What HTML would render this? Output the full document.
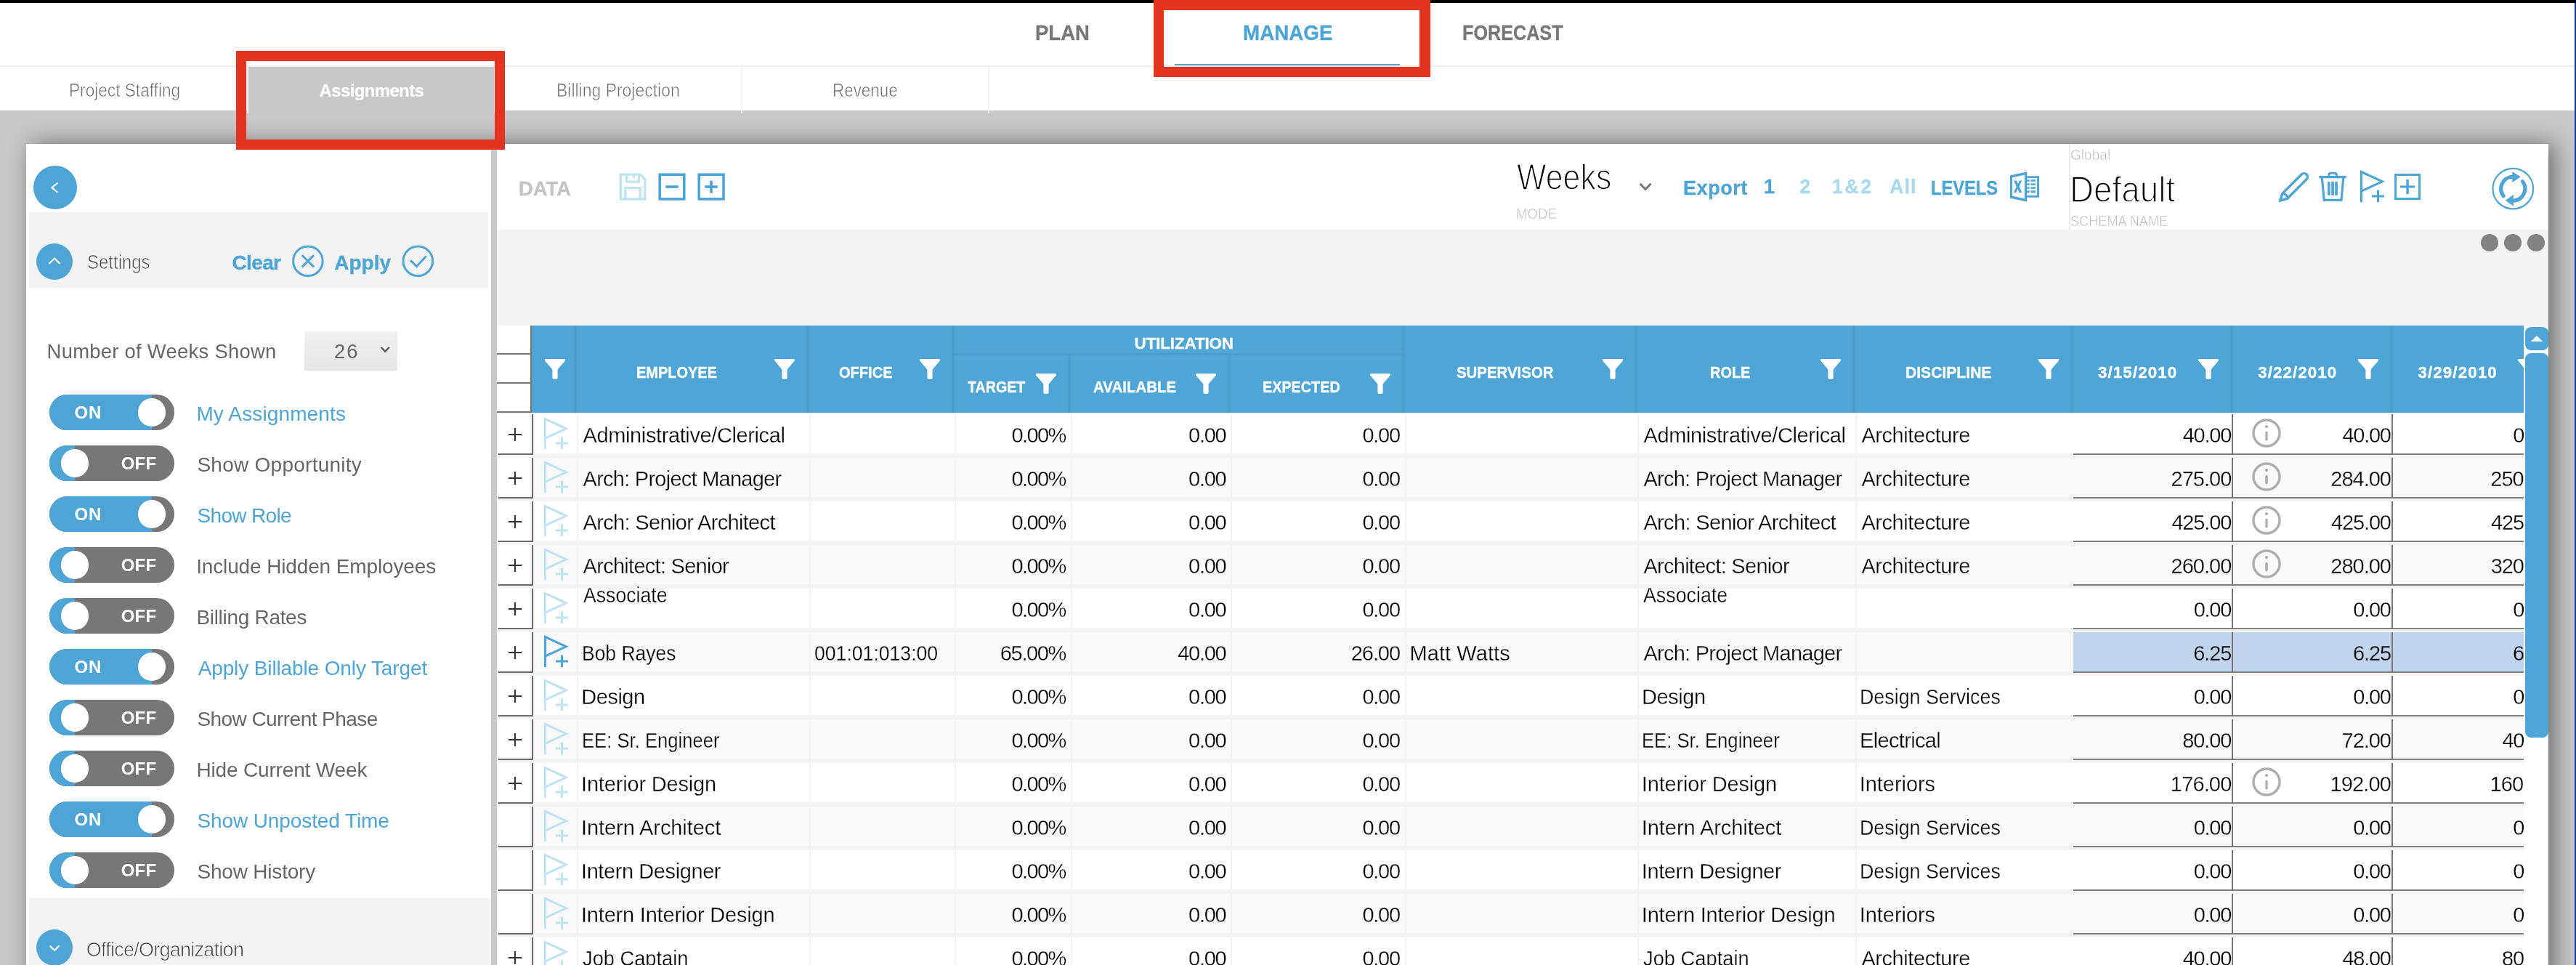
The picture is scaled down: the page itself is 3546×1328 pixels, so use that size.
<!DOCTYPE html>
<html><head><meta charset="utf-8"><title>Assignments</title>
<style>
html,body{margin:0;padding:0;}
body{width:3546px;height:1328px;overflow:hidden;position:relative;background:#c8c8c8;font-family:"Liberation Sans",sans-serif;}
#root{position:absolute;left:0;top:0;width:3546px;height:1328px;overflow:hidden;will-change:transform;}
#root div,#root span,#root svg{position:absolute;}
.t{white-space:pre;display:block;}
</style></head><body><div id="root">
<div style="left:0px;top:0px;width:3546px;height:4px;background:#000;"></div>
<div style="left:0px;top:4px;width:3546px;height:86px;background:#fff;"></div>
<div style="left:0px;top:90px;width:3546px;height:2px;background:#efefef;"></div>
<div style="left:0px;top:92px;width:3546px;height:60px;background:#fff;"></div>
<div style="left:3544px;top:4px;width:2px;height:1328px;background:#10399b;"></div>
<span class="t " style="left:1424.93px;top:31px;font-size:29px;line-height:29px;color:#777;font-weight:700;transform:scaleX(0.9497);transform-origin:0 0;-webkit-text-stroke:0.3px #777;">PLAN</span>
<span class="t " style="left:1710.81px;top:31px;font-size:29px;line-height:29px;color:#4ea5d5;font-weight:700;transform:scaleX(0.9574);transform-origin:0 0;-webkit-text-stroke:0.3px #4ea5d5;">MANAGE</span>
<span class="t " style="left:2012.98px;top:31px;font-size:29px;line-height:29px;color:#777;font-weight:700;transform:scaleX(0.8685);transform-origin:0 0;-webkit-text-stroke:0.3px #777;">FORECAST</span>
<div style="left:1617px;top:88px;width:310px;height:2px;background:#4ea5d5;"></div>
<div style="left:342px;top:92px;width:338px;height:60px;background:#c8c8c8;"></div>
<div style="left:340px;top:92px;width:2px;height:64px;background:#f3f3f3;"></div>
<div style="left:680px;top:92px;width:2px;height:64px;background:#f3f3f3;"></div>
<div style="left:1020px;top:92px;width:2px;height:64px;background:#f3f3f3;"></div>
<div style="left:1360px;top:92px;width:2px;height:64px;background:#f3f3f3;"></div>
<span class="t " style="left:94.59px;top:112px;font-size:25px;line-height:25px;color:#6c6c6c;transform:scaleX(0.9056);transform-origin:0 0;-webkit-text-stroke:0.55px #fff;">Project Staffing</span>
<span class="t " style="left:439.53px;top:113px;font-size:24px;line-height:24px;color:#fff;font-weight:700;letter-spacing:-0.639px;-webkit-text-stroke:0.2px #fff;">Assignments</span>
<span class="t " style="left:766.36px;top:112px;font-size:25px;line-height:25px;color:#6c6c6c;transform:scaleX(0.9183);transform-origin:0 0;-webkit-text-stroke:0.55px #fff;">Billing Projection</span>
<span class="t " style="left:1146.11px;top:112px;font-size:25px;line-height:25px;color:#6c6c6c;transform:scaleX(0.8959);transform-origin:0 0;-webkit-text-stroke:0.55px #fff;">Revenue</span>
<div style="left:0;top:152px;width:3544px;height:1176px;overflow:hidden;"><div style="left:36px;top:46px;width:3472px;height:1210px;background:#fff;box-shadow:8px 0 30px 0 rgba(0,0,0,.47);"></div></div>
<div style="left:3543px;top:152px;width:1px;height:1328px;background:#d2d0cc;"></div>
<div style="left:676px;top:198px;width:8px;height:1328px;background:#c8c8c8;"></div>
<div style="left:684px;top:316px;width:2824px;height:1328px;background:#f3f3f3;"></div>
<div style="left:46px;top:228px;width:60px;height:60px;border-radius:50%;background:#4ea5d5;"></div>
<svg style="left:46px;top:228px;" width="60" height="60" viewBox="0 0 60 60"><path d="M33.5 23.5 L25.5 30.2 L33.5 37" fill="none" stroke="#fff" stroke-width="2.2"/></svg>
<div style="left:40px;top:292px;width:632px;height:104px;background:#f3f3f3;"></div>
<div style="left:50px;top:334.5px;width:50px;height:50px;border-radius:50%;background:#4ea5d5;"></div>
<svg style="left:50px;top:334.5px;" width="50" height="50" viewBox="0 0 50 50"><path d="M17.5 28 L25 20.5 L32.5 28" fill="none" stroke="#fff" stroke-width="2.2"/></svg>
<span class="t " style="left:119.57px;top:348px;font-size:27px;line-height:27px;color:#444;transform:scaleX(0.8877);transform-origin:0 0;-webkit-text-stroke:0.7px #f3f3f3;">Settings</span>
<span class="t " style="left:319.45px;top:348px;font-size:28px;line-height:28px;color:#4ea5d5;font-weight:700;letter-spacing:-0.620px;-webkit-text-stroke:0.35px #4ea5d5;">Clear</span>
<span class="t " style="left:460.31px;top:348px;font-size:28px;line-height:28px;color:#4ea5d5;font-weight:700;letter-spacing:-0.029px;-webkit-text-stroke:0.35px #4ea5d5;">Apply</span>
<svg style="left:400px;top:335px;" width="50" height="50" viewBox="0 0 50 50"><circle cx="23.9" cy="24.3" r="20.3" fill="none" stroke="#4ea5d5" stroke-width="3"/><path d="M15.8 16.2 L32 32.4 M32 16.2 L15.8 32.4" stroke="#4ea5d5" stroke-width="3" fill="none"/></svg>
<svg style="left:551px;top:335px;" width="50" height="50" viewBox="0 0 50 50"><circle cx="24.3" cy="24.3" r="20.3" fill="none" stroke="#4ea5d5" stroke-width="3"/><path d="M14 23.3 L22.6 31.6 L35.6 17.5" stroke="#4ea5d5" stroke-width="3" fill="none"/></svg>
<span class="t " style="left:64.57px;top:470px;font-size:27.4px;line-height:27.4px;color:#666;letter-spacing:0.282px;">Number of Weeks Shown</span>
<div style="left:419px;top:456px;width:128px;height:54px;background:linear-gradient(#f1f1f1,#e5e5e5);"></div>
<span class="t " style="left:460.03px;top:470px;font-size:27.4px;line-height:27.4px;color:#666;letter-spacing:1.986px;">26</span>
<svg style="left:520px;top:472px;" width="20" height="20" viewBox="0 0 20 20"><path d="M4.6 6 L10.2 11.6 L15.8 6" fill="none" stroke="#555" stroke-width="2.3"/></svg>
<div style="left:68px;top:543px;width:172px;height:49px;border-radius:24.5px;overflow:hidden;background:#777;"><div style="left:0;top:0;width:141px;height:49px;background:#4ea5d5;"></div></div>
<div style="left:189.7px;top:548.2px;width:38.6px;height:38.6px;border-radius:50%;background:#fff;"></div>
<span class="t " style="left:102.54px;top:556px;font-size:24px;line-height:24px;color:#fff;font-weight:700;letter-spacing:0.780px;">ON</span>
<span class="t " style="left:270.43px;top:556px;font-size:28px;line-height:28px;color:#4ea5d5;letter-spacing:0.124px;">My Assignments</span>
<div style="left:68px;top:613px;width:172px;height:49px;border-radius:24.5px;overflow:hidden;background:#777;"><div style="left:0;top:0;width:35px;height:49px;background:#4ea5d5;"></div></div>
<div style="left:83.7px;top:618.2px;width:38.6px;height:38.6px;border-radius:50%;background:#fff;"></div>
<span class="t " style="left:166.64px;top:626px;font-size:24px;line-height:24px;color:#fff;font-weight:700;letter-spacing:0.215px;">OFF</span>
<span class="t " style="left:271.44px;top:626px;font-size:28px;line-height:28px;color:#666;letter-spacing:0.255px;">Show Opportunity</span>
<div style="left:68px;top:683px;width:172px;height:49px;border-radius:24.5px;overflow:hidden;background:#777;"><div style="left:0;top:0;width:141px;height:49px;background:#4ea5d5;"></div></div>
<div style="left:189.7px;top:688.2px;width:38.6px;height:38.6px;border-radius:50%;background:#fff;"></div>
<span class="t " style="left:102.54px;top:696px;font-size:24px;line-height:24px;color:#fff;font-weight:700;letter-spacing:0.780px;">ON</span>
<span class="t " style="left:271.44px;top:696px;font-size:28px;line-height:28px;color:#4ea5d5;letter-spacing:-0.654px;">Show Role</span>
<div style="left:68px;top:753px;width:172px;height:49px;border-radius:24.5px;overflow:hidden;background:#777;"><div style="left:0;top:0;width:35px;height:49px;background:#4ea5d5;"></div></div>
<div style="left:83.7px;top:758.2px;width:38.6px;height:38.6px;border-radius:50%;background:#fff;"></div>
<span class="t " style="left:166.64px;top:766px;font-size:24px;line-height:24px;color:#fff;font-weight:700;letter-spacing:0.215px;">OFF</span>
<span class="t " style="left:270.14px;top:766px;font-size:28px;line-height:28px;color:#666;letter-spacing:-0.133px;">Include Hidden Employees</span>
<div style="left:68px;top:823px;width:172px;height:49px;border-radius:24.5px;overflow:hidden;background:#777;"><div style="left:0;top:0;width:35px;height:49px;background:#4ea5d5;"></div></div>
<div style="left:83.7px;top:828.2px;width:38.6px;height:38.6px;border-radius:50%;background:#fff;"></div>
<span class="t " style="left:166.64px;top:836px;font-size:24px;line-height:24px;color:#fff;font-weight:700;letter-spacing:0.215px;">OFF</span>
<span class="t " style="left:270.43px;top:836px;font-size:28px;line-height:28px;color:#666;letter-spacing:-0.305px;">Billing Rates</span>
<div style="left:68px;top:893px;width:172px;height:49px;border-radius:24.5px;overflow:hidden;background:#777;"><div style="left:0;top:0;width:141px;height:49px;background:#4ea5d5;"></div></div>
<div style="left:189.7px;top:898.2px;width:38.6px;height:38.6px;border-radius:50%;background:#fff;"></div>
<span class="t " style="left:102.54px;top:906px;font-size:24px;line-height:24px;color:#fff;font-weight:700;letter-spacing:0.780px;">ON</span>
<span class="t " style="left:272.66px;top:906px;font-size:28px;line-height:28px;color:#4ea5d5;letter-spacing:-0.121px;">Apply Billable Only Target</span>
<div style="left:68px;top:963px;width:172px;height:49px;border-radius:24.5px;overflow:hidden;background:#777;"><div style="left:0;top:0;width:35px;height:49px;background:#4ea5d5;"></div></div>
<div style="left:83.7px;top:968.2px;width:38.6px;height:38.6px;border-radius:50%;background:#fff;"></div>
<span class="t " style="left:166.64px;top:976px;font-size:24px;line-height:24px;color:#fff;font-weight:700;letter-spacing:0.215px;">OFF</span>
<span class="t " style="left:271.44px;top:976px;font-size:28px;line-height:28px;color:#666;letter-spacing:-0.564px;">Show Current Phase</span>
<div style="left:68px;top:1033px;width:172px;height:49px;border-radius:24.5px;overflow:hidden;background:#777;"><div style="left:0;top:0;width:35px;height:49px;background:#4ea5d5;"></div></div>
<div style="left:83.7px;top:1038.2px;width:38.6px;height:38.6px;border-radius:50%;background:#fff;"></div>
<span class="t " style="left:166.64px;top:1046px;font-size:24px;line-height:24px;color:#fff;font-weight:700;letter-spacing:0.215px;">OFF</span>
<span class="t " style="left:270.43px;top:1046px;font-size:28px;line-height:28px;color:#666;letter-spacing:-0.161px;">Hide Current Week</span>
<div style="left:68px;top:1103px;width:172px;height:49px;border-radius:24.5px;overflow:hidden;background:#777;"><div style="left:0;top:0;width:141px;height:49px;background:#4ea5d5;"></div></div>
<div style="left:189.7px;top:1108.2px;width:38.6px;height:38.6px;border-radius:50%;background:#fff;"></div>
<span class="t " style="left:102.54px;top:1116px;font-size:24px;line-height:24px;color:#fff;font-weight:700;letter-spacing:0.780px;">ON</span>
<span class="t " style="left:271.44px;top:1116px;font-size:28px;line-height:28px;color:#4ea5d5;letter-spacing:-0.103px;">Show Unposted Time</span>
<div style="left:68px;top:1173px;width:172px;height:49px;border-radius:24.5px;overflow:hidden;background:#777;"><div style="left:0;top:0;width:35px;height:49px;background:#4ea5d5;"></div></div>
<div style="left:83.7px;top:1178.2px;width:38.6px;height:38.6px;border-radius:50%;background:#fff;"></div>
<span class="t " style="left:166.64px;top:1186px;font-size:24px;line-height:24px;color:#fff;font-weight:700;letter-spacing:0.215px;">OFF</span>
<span class="t " style="left:271.44px;top:1186px;font-size:28px;line-height:28px;color:#666;letter-spacing:-0.196px;">Show History</span>
<div style="left:40px;top:1236px;width:636px;height:100px;background:#f3f3f3;"></div>
<div style="left:50px;top:1279px;width:50px;height:50px;border-radius:50%;background:#4ea5d5;"></div>
<svg style="left:50px;top:1279px;" width="50" height="50" viewBox="0 0 50 50"><path d="M18.5 22.5 L25 29 L31.5 22.5" fill="none" stroke="#fff" stroke-width="2.2"/></svg>
<span class="t " style="left:118.70px;top:1294px;font-size:27px;line-height:27px;color:#444;letter-spacing:-0.745px;-webkit-text-stroke:0.7px #f3f3f3;">Office/Organization</span>
<span class="t " style="left:714.06px;top:246px;font-size:27.4px;line-height:27.4px;color:#c4c4c4;font-weight:700;letter-spacing:0.019px;-webkit-text-stroke:0.35px #c4c4c4;">DATA</span>
<svg style="left:850px;top:236px;" width="44" height="44" viewBox="0 0 44 44"><g fill="none" stroke="#bfe3f1" stroke-width="3.3"><path d="M4.3 4.1 H31.2 L37.9 10.8 V38 H4.3 Z"/><path d="M12.5 4 V14.2 H29.4 V4"/><path d="M10.8 38 V22.6 H31.3 V38"/></g><rect x="21.1" y="4" width="3" height="5" fill="#bfe3f1"/></svg>
<svg style="left:904px;top:236px;" width="44" height="44" viewBox="0 0 44 44"><rect x="4.2" y="4.2" width="33.6" height="33.7" fill="none" stroke="#4ea5d5" stroke-width="3.6"/><rect x="12.3" y="19.2" width="17.4" height="3.7" fill="#4ea5d5"/></svg>
<svg style="left:958px;top:236px;" width="44" height="44" viewBox="0 0 44 44"><rect x="4.2" y="4.2" width="33.8" height="33.7" fill="none" stroke="#4ea5d5" stroke-width="3.6"/><rect x="12.3" y="19.2" width="17.4" height="3.7" fill="#4ea5d5"/><rect x="19.2" y="12.6" width="3.7" height="17.1" fill="#4ea5d5"/></svg>
<span class="t " style="left:2087.59px;top:219px;font-size:50.4px;line-height:50.4px;color:#000;transform:scaleX(0.8515);transform-origin:0 0;-webkit-text-stroke:1.7px #fff;">Weeks</span>
<span class="t " style="left:2086.84px;top:284px;font-size:20.4px;line-height:20.4px;color:#bbb;transform:scaleX(0.9135);transform-origin:0 0;-webkit-text-stroke:0.5px #fff;">MODE</span>
<svg style="left:2250px;top:245px;" width="30" height="24" viewBox="0 0 30 24"><path d="M7.6 7.8 L15 15.6 L22.4 7.8" fill="none" stroke="#777" stroke-width="3"/></svg>
<span class="t " style="left:2317.09px;top:246px;font-size:27px;line-height:27px;color:#4ea5d5;font-weight:700;letter-spacing:0.511px;-webkit-text-stroke:0.35px #4ea5d5;">Export</span>
<span class="t " style="left:2427.99px;top:244px;font-size:27px;line-height:27px;color:#4ea5d5;font-weight:700;-webkit-text-stroke:0.35px #4ea5d5;">1</span>
<span class="t " style="left:2477.26px;top:244px;font-size:27px;line-height:27px;color:#a9d9ed;font-weight:700;-webkit-text-stroke:0.35px #a9d9ed;">2</span>
<span class="t " style="left:2521.69px;top:244px;font-size:27px;line-height:27px;color:#a9d9ed;font-weight:700;letter-spacing:2.586px;-webkit-text-stroke:0.35px #a9d9ed;">1&amp;2</span>
<span class="t " style="left:2600.93px;top:244px;font-size:27px;line-height:27px;color:#a9d9ed;font-weight:700;letter-spacing:0.994px;-webkit-text-stroke:0.35px #a9d9ed;">All</span>
<span class="t " style="left:2657.61px;top:246px;font-size:27px;line-height:27px;color:#4ea5d5;font-weight:700;transform:scaleX(0.8772);transform-origin:0 0;-webkit-text-stroke:0.35px #4ea5d5;">LEVELS</span>
<svg style="left:2766px;top:236px;" width="42" height="42" viewBox="0 0 42 42"><g fill="#4ea5d5"><path fill-rule="evenodd" d="M1 5.2 L24.2 0.6 V41.4 L1 36.7 Z M4 8.2 L21 4.8 V37.4 L4 33.6 Z"/><path fill-rule="evenodd" d="M24.2 6.2 H41 V35.8 H24.2 Z M24.2 9 H38.1 V32.9 H24.2 Z"/><rect x="24.2" y="11.2" width="3.5" height="2.6"/><rect x="29.4" y="11.2" width="6.6" height="2.6"/><rect x="24.2" y="16.3" width="3.5" height="2.6"/><rect x="29.4" y="16.3" width="6.6" height="2.6"/><rect x="24.2" y="21.3" width="3.5" height="2.6"/><rect x="29.4" y="21.3" width="6.6" height="2.6"/><rect x="24.2" y="26.3" width="3.5" height="3.1"/><rect x="29.4" y="26.3" width="6.6" height="3.1"/><path d="M6 12.6 H9.9 L11.8 17.3 L13.9 12.6 H17.3 L13.6 20.6 L17.4 29.1 H13.6 L11.6 24 L9.4 29.1 H6 L9.8 20.7 Z"/></g></svg>
<div style="left:2848px;top:198px;width:2px;height:118px;background:#ececec;"></div>
<span class="t " style="left:2849.50px;top:202px;font-size:21px;line-height:21px;color:#bbb;transform:scaleX(0.9095);transform-origin:0 0;-webkit-text-stroke:0.5px #fff;">Global</span>
<span class="t " style="left:2848.63px;top:236px;font-size:50px;line-height:50px;color:#000;transform:scaleX(0.9159);transform-origin:0 0;-webkit-text-stroke:1.7px #fff;">Default</span>
<span class="t " style="left:2849.63px;top:293px;font-size:21px;line-height:21px;color:#bbb;transform:scaleX(0.8645);transform-origin:0 0;-webkit-text-stroke:0.5px #fff;">SCHEMA NAME</span>
<svg style="left:3130px;top:230px;" width="56" height="56" viewBox="0 0 56 56"><g transform="translate(7.1 47.9) rotate(-45)" fill="none" stroke="#4ea5d5" stroke-width="3.4" stroke-linejoin="miter"><path d="M2.6 0 L11.2 -4.8 H48.8 A4.8 4.8 0 0 1 48.8 4.8 H11.2 Z"/><path d="M11.2 -4.8 Q16.4 0 11.2 4.8"/></g></svg>
<svg style="left:3190px;top:234px;" width="44" height="46" viewBox="0 0 44 46"><g fill="none" stroke="#4ea5d5" stroke-width="3.1"><path d="M2.3 9.6 H39.7"/><path d="M15.8 9 V7 Q15.8 4.2 18.6 4.2 H23.6 Q26.4 4.2 26.4 7 V9"/><path d="M6.3 10.5 L9.2 41.4 H33 L35.8 10.5"/></g><g fill="#4ea5d5"><rect x="14.1" y="16.1" width="3.6" height="18.7"/><rect x="19.2" y="16.1" width="3.7" height="18.7"/><rect x="24.2" y="16.1" width="3.7" height="18.7"/></g></svg>
<svg style="left:3248px;top:233.6px;" width="40" height="46" viewBox="0 0 40 46"><g fill="none" stroke="#4ea5d5" stroke-width="3.1"><path d="M2.5 1 V44.3"/><path d="M2.5 2.5 L31.3 15.8 L2.5 29.1 Z" stroke-linejoin="miter"/><path d="M17 36 H34 M25.5 27.6 V44.3"/></g></svg>
<svg style="left:3294px;top:237px;" width="42" height="42" viewBox="0 0 42 42"><rect x="3.6" y="3.5" width="33" height="33" fill="none" stroke="#4ea5d5" stroke-width="3"/><rect x="10" y="18.4" width="20" height="3.1" fill="#4ea5d5"/><rect x="18.3" y="10" width="3.5" height="19.9" fill="#4ea5d5"/></svg>
<svg style="left:3424px;top:224px;" width="72" height="72" viewBox="0 0 72 72"><circle cx="35.3" cy="35.7" r="27.8" fill="none" stroke="#4ea5d5" stroke-width="2.2"/><g fill="none" stroke="#4ea5d5" stroke-width="5.2" stroke-linecap="round"><path d="M22.12 45.63 A16.5 16.5 0 0 1 34.30 19.23" /><path d="M48.48 25.77 A16.5 16.5 0 0 1 36.30 52.17" /></g><path fill="#4ea5d5" d="M34.3 12.200000000000003 L45.8 19.200000000000003 L34.3 27.1 Z"/><path fill="#4ea5d5" d="M35.8 44.1 L24.9 51.7 L35.8 59.800000000000004 Z"/></svg>
<div style="left:3414.9px;top:321.8px;width:24px;height:24px;border-radius:50%;background:#828282;"></div>
<div style="left:3446.9px;top:321.8px;width:24px;height:24px;border-radius:50%;background:#828282;"></div>
<div style="left:3478.9px;top:321.8px;width:24px;height:24px;border-radius:50%;background:#828282;"></div>
<div style="left:684px;top:448px;width:46px;height:120px;background:#fff;"></div>
<div style="left:730px;top:448px;width:2px;height:120px;background:#777;"></div>
<div style="left:684px;top:486px;width:46px;height:2px;background:#777;"></div>
<div style="left:684px;top:526px;width:46px;height:2px;background:#777;"></div>
<div style="left:684px;top:566px;width:46px;height:2px;background:#777;"></div>
<div style="left:732px;top:448px;width:2742px;height:119.5px;background:#4fa5d5;"></div>
<div style="left:789.7px;top:448px;width:4.2px;height:119.5px;background:rgba(0,0,40,.04);"></div>
<div style="left:1109.7px;top:448px;width:4.2px;height:119.5px;background:rgba(0,0,40,.04);"></div>
<div style="left:1309.7px;top:448px;width:4.2px;height:119.5px;background:rgba(0,0,40,.04);"></div>
<div style="left:1469.7px;top:488px;width:4.2px;height:79.5px;background:rgba(0,0,40,.04);"></div>
<div style="left:1689.7px;top:488px;width:4.2px;height:79.5px;background:rgba(0,0,40,.04);"></div>
<div style="left:1929.7px;top:448px;width:4.2px;height:119.5px;background:rgba(0,0,40,.04);"></div>
<div style="left:2249.7px;top:448px;width:4.2px;height:119.5px;background:rgba(0,0,40,.04);"></div>
<div style="left:2549.7px;top:448px;width:4.2px;height:119.5px;background:rgba(0,0,40,.04);"></div>
<div style="left:2849.7px;top:448px;width:4.2px;height:119.5px;background:rgba(0,0,40,.04);"></div>
<div style="left:3069.7px;top:448px;width:4.2px;height:119.5px;background:rgba(0,0,40,.04);"></div>
<div style="left:3289.7px;top:448px;width:4.2px;height:119.5px;background:rgba(0,0,40,.04);"></div>
<div style="left:1312px;top:485.5px;width:619px;height:3px;background:rgba(0,0,40,.045);"></div>
<svg style="left:750px;top:494px;" width="28" height="28" viewBox="0 0 28 28"><path fill="#fff" d="M1.8 0 H26.2 Q29.3 0.3 27.4 3 L17.6 14.6 V25.8 Q17.6 28 15.4 28 H12.6 Q10.4 28 10.4 25.8 V14.6 L0.6 3 Q-1.3 0.3 1.8 0 Z"/></svg>
<span class="t " style="left:876.33px;top:502px;font-size:22.4px;line-height:22.4px;color:#fff;font-weight:700;transform:scaleX(0.8924);transform-origin:0 0;-webkit-text-stroke:0.3px #fff;">EMPLOYEE</span>
<svg style="left:1066px;top:494px;" width="28" height="28" viewBox="0 0 28 28"><path fill="#fff" d="M1.8 0 H26.2 Q29.3 0.3 27.4 3 L17.6 14.6 V25.8 Q17.6 28 15.4 28 H12.6 Q10.4 28 10.4 25.8 V14.6 L0.6 3 Q-1.3 0.3 1.8 0 Z"/></svg>
<span class="t " style="left:1155.05px;top:502px;font-size:22.4px;line-height:22.4px;color:#fff;font-weight:700;transform:scaleX(0.8957);transform-origin:0 0;-webkit-text-stroke:0.3px #fff;">OFFICE</span>
<svg style="left:1266.2px;top:494px;" width="28" height="28" viewBox="0 0 28 28"><path fill="#fff" d="M1.8 0 H26.2 Q29.3 0.3 27.4 3 L17.6 14.6 V25.8 Q17.6 28 15.4 28 H12.6 Q10.4 28 10.4 25.8 V14.6 L0.6 3 Q-1.3 0.3 1.8 0 Z"/></svg>
<span class="t " style="left:1561.61px;top:462px;font-size:22.4px;line-height:22.4px;color:#fff;font-weight:700;letter-spacing:-0.125px;-webkit-text-stroke:0.3px #fff;">UTILIZATION</span>
<span class="t " style="left:1331.95px;top:522px;font-size:22.4px;line-height:22.4px;color:#fff;font-weight:700;transform:scaleX(0.8779);transform-origin:0 0;-webkit-text-stroke:0.3px #fff;">TARGET</span>
<svg style="left:1426.2px;top:514px;" width="28" height="28" viewBox="0 0 28 28"><path fill="#fff" d="M1.8 0 H26.2 Q29.3 0.3 27.4 3 L17.6 14.6 V25.8 Q17.6 28 15.4 28 H12.6 Q10.4 28 10.4 25.8 V14.6 L0.6 3 Q-1.3 0.3 1.8 0 Z"/></svg>
<span class="t " style="left:1505.16px;top:522px;font-size:22.4px;line-height:22.4px;color:#fff;font-weight:700;transform:scaleX(0.9153);transform-origin:0 0;-webkit-text-stroke:0.3px #fff;">AVAILABLE</span>
<svg style="left:1646.3px;top:514px;" width="28" height="28" viewBox="0 0 28 28"><path fill="#fff" d="M1.8 0 H26.2 Q29.3 0.3 27.4 3 L17.6 14.6 V25.8 Q17.6 28 15.4 28 H12.6 Q10.4 28 10.4 25.8 V14.6 L0.6 3 Q-1.3 0.3 1.8 0 Z"/></svg>
<span class="t " style="left:1738.44px;top:522px;font-size:22.4px;line-height:22.4px;color:#fff;font-weight:700;transform:scaleX(0.8840);transform-origin:0 0;-webkit-text-stroke:0.3px #fff;">EXPECTED</span>
<svg style="left:1885.6px;top:514px;" width="28" height="28" viewBox="0 0 28 28"><path fill="#fff" d="M1.8 0 H26.2 Q29.3 0.3 27.4 3 L17.6 14.6 V25.8 Q17.6 28 15.4 28 H12.6 Q10.4 28 10.4 25.8 V14.6 L0.6 3 Q-1.3 0.3 1.8 0 Z"/></svg>
<span class="t " style="left:2004.56px;top:502px;font-size:22.4px;line-height:22.4px;color:#fff;font-weight:700;transform:scaleX(0.9119);transform-origin:0 0;-webkit-text-stroke:0.3px #fff;">SUPERVISOR</span>
<svg style="left:2205.5px;top:494px;" width="28" height="28" viewBox="0 0 28 28"><path fill="#fff" d="M1.8 0 H26.2 Q29.3 0.3 27.4 3 L17.6 14.6 V25.8 Q17.6 28 15.4 28 H12.6 Q10.4 28 10.4 25.8 V14.6 L0.6 3 Q-1.3 0.3 1.8 0 Z"/></svg>
<span class="t " style="left:2353.63px;top:502px;font-size:22.4px;line-height:22.4px;color:#fff;font-weight:700;transform:scaleX(0.8899);transform-origin:0 0;-webkit-text-stroke:0.3px #fff;">ROLE</span>
<svg style="left:2505.9px;top:494px;" width="28" height="28" viewBox="0 0 28 28"><path fill="#fff" d="M1.8 0 H26.2 Q29.3 0.3 27.4 3 L17.6 14.6 V25.8 Q17.6 28 15.4 28 H12.6 Q10.4 28 10.4 25.8 V14.6 L0.6 3 Q-1.3 0.3 1.8 0 Z"/></svg>
<span class="t " style="left:2622.65px;top:502px;font-size:22.4px;line-height:22.4px;color:#fff;font-weight:700;transform:scaleX(0.9427);transform-origin:0 0;-webkit-text-stroke:0.3px #fff;">DISCIPLINE</span>
<svg style="left:2805.7px;top:494px;" width="28" height="28" viewBox="0 0 28 28"><path fill="#fff" d="M1.8 0 H26.2 Q29.3 0.3 27.4 3 L17.6 14.6 V25.8 Q17.6 28 15.4 28 H12.6 Q10.4 28 10.4 25.8 V14.6 L0.6 3 Q-1.3 0.3 1.8 0 Z"/></svg>
<span class="t " style="left:2887.95px;top:502px;font-size:22.4px;line-height:22.4px;color:#fff;font-weight:700;letter-spacing:1.093px;-webkit-text-stroke:0.3px #fff;">3/15/2010</span>
<svg style="left:3026.3px;top:494px;" width="28" height="28" viewBox="0 0 28 28"><path fill="#fff" d="M1.8 0 H26.2 Q29.3 0.3 27.4 3 L17.6 14.6 V25.8 Q17.6 28 15.4 28 H12.6 Q10.4 28 10.4 25.8 V14.6 L0.6 3 Q-1.3 0.3 1.8 0 Z"/></svg>
<span class="t " style="left:3108.35px;top:502px;font-size:22.4px;line-height:22.4px;color:#fff;font-weight:700;letter-spacing:1.031px;-webkit-text-stroke:0.3px #fff;">3/22/2010</span>
<svg style="left:3245.8px;top:494px;" width="28" height="28" viewBox="0 0 28 28"><path fill="#fff" d="M1.8 0 H26.2 Q29.3 0.3 27.4 3 L17.6 14.6 V25.8 Q17.6 28 15.4 28 H12.6 Q10.4 28 10.4 25.8 V14.6 L0.6 3 Q-1.3 0.3 1.8 0 Z"/></svg>
<span class="t " style="left:3328.45px;top:502px;font-size:22.4px;line-height:22.4px;color:#fff;font-weight:700;letter-spacing:1.081px;-webkit-text-stroke:0.3px #fff;">3/29/2010</span>
<svg style="left:3466.3px;top:494px;" width="7.699999999999818" height="28" viewBox="0 0 7.699999999999818 28"><path fill="#fff" d="M1.8 0 H26.2 Q29.3 0.3 27.4 3 L17.6 14.6 V25.8 Q17.6 28 15.4 28 H12.6 Q10.4 28 10.4 25.8 V14.6 L0.6 3 Q-1.3 0.3 1.8 0 Z"/></svg>
<div style="left:3474px;top:448px;width:34px;height:1328px;background:#fff;"></div>
<div style="left:3476px;top:450px;width:32px;height:32px;border-radius:8px;background:#4fa5d5;"></div>
<svg style="left:3476px;top:450px;" width="32" height="32" viewBox="0 0 32 32"><path d="M7.8 20 L16 12 L24.2 20 Z" fill="#fff"/></svg>
<div style="left:3476px;top:486px;width:32px;height:529px;border-radius:8px;background:#4fa5d5;"></div>
<div style="left:0;top:0;width:3474px;height:1328px;overflow:hidden;">
<div style="left:686px;top:570px;width:46.4px;height:54.3px;background:#fff;"></div>
<div style="left:732.4px;top:570px;width:1.9px;height:56.3px;background:#6a6a6a;"></div>
<div style="left:686px;top:624.3px;width:48.3px;height:2px;background:#6a6a6a;"></div>
<div style="left:700.2px;top:596.7px;width:17.7px;height:2px;background:#333;"></div>
<div style="left:708.1px;top:588.9px;width:2px;height:17.7px;background:#333;"></div>
<div style="left:736px;top:570px;width:58px;height:54px;background:#fff;"></div>
<div style="left:796px;top:570px;width:318px;height:54px;background:#fff;"></div>
<div style="left:1116px;top:570px;width:198px;height:54px;background:#fff;"></div>
<div style="left:1316px;top:570px;width:158px;height:54px;background:#fff;"></div>
<div style="left:1476px;top:570px;width:218px;height:54px;background:#fff;"></div>
<div style="left:1696px;top:570px;width:238px;height:54px;background:#fff;"></div>
<div style="left:1936px;top:570px;width:318px;height:54px;background:#fff;"></div>
<div style="left:2256px;top:570px;width:298px;height:54px;background:#fff;"></div>
<div style="left:2556px;top:570px;width:298px;height:54px;background:#fff;"></div>
<svg style="left:747.95px;top:573.8px;" width="40" height="46" viewBox="0 0 40 46"><g fill="none" stroke="#bfe3f1" stroke-width="3.1"><path d="M2.5 1 V44.3"/><path d="M2.5 2.5 L31.3 15.8 L2.5 29.1 Z" stroke-linejoin="miter"/><path d="M17 36 H34 M25.5 27.6 V44.3"/></g></svg>
<span class="t " style="left:802.61px;top:585px;font-size:29px;line-height:29px;color:#000;letter-spacing:-0.392px;-webkit-text-stroke:0.3px #fff;">Administrative/Clerical</span>
<span class="t " style="left:1392.55px;top:585px;font-size:29px;line-height:29px;color:#000;letter-spacing:-1.599px;-webkit-text-stroke:0.3px #fff;">0.00%</span>
<span class="t " style="left:1636.05px;top:585px;font-size:29px;line-height:29px;color:#000;letter-spacing:-1.271px;-webkit-text-stroke:0.3px #fff;">0.00</span>
<span class="t " style="left:1875.45px;top:585px;font-size:29px;line-height:29px;color:#000;letter-spacing:-1.271px;-webkit-text-stroke:0.3px #fff;">0.00</span>
<span class="t " style="left:2262.41px;top:585px;font-size:29px;line-height:29px;color:#000;letter-spacing:-0.374px;-webkit-text-stroke:0.3px #fff;">Administrative/Clerical</span>
<span class="t " style="left:2562.41px;top:585px;font-size:29px;line-height:29px;color:#000;letter-spacing:-0.428px;-webkit-text-stroke:0.3px #fff;">Architecture</span>
<div style="left:2854px;top:570px;width:660px;height:54.2px;background:#fff;"></div>
<div style="left:2854px;top:624.2px;width:700px;height:2px;background:#808080;"></div>
<div style="left:3072.3px;top:570px;width:2px;height:56px;background:#777;"></div>
<div style="left:3292.3px;top:570px;width:2px;height:56px;background:#777;"></div>
<span class="t " style="left:3004.76px;top:585px;font-size:29px;line-height:29px;color:#000;letter-spacing:-1.264px;-webkit-text-stroke:0.3px #fff;">40.00</span>
<span class="t " style="left:3224.46px;top:585px;font-size:29px;line-height:29px;color:#000;letter-spacing:-1.264px;-webkit-text-stroke:0.3px #fff;">40.00</span>
<span class="t " style="left:3459.35px;top:585px;font-size:29px;line-height:29px;color:#000;letter-spacing:-1.271px;-webkit-text-stroke:0.3px #fff;">0.00</span>
<svg style="left:3098px;top:574px;" width="44" height="44" viewBox="0 0 44 44"><circle cx="22" cy="22" r="18" fill="none" stroke="#adadad" stroke-width="3.4"/><circle cx="22" cy="13.2" r="2.1" fill="#adadad"/><rect x="20.3" y="19.8" width="3.4" height="12.6" rx="1.6" fill="#adadad"/></svg>
<div style="left:686px;top:630px;width:46.4px;height:54.3px;background:#fff;"></div>
<div style="left:732.4px;top:630px;width:1.9px;height:56.3px;background:#6a6a6a;"></div>
<div style="left:686px;top:684.3px;width:48.3px;height:2px;background:#6a6a6a;"></div>
<div style="left:700.2px;top:656.7px;width:17.7px;height:2px;background:#333;"></div>
<div style="left:708.1px;top:648.9px;width:2px;height:17.7px;background:#333;"></div>
<div style="left:736px;top:630px;width:58px;height:54px;background:#f9f9f9;"></div>
<div style="left:796px;top:630px;width:318px;height:54px;background:#f9f9f9;"></div>
<div style="left:1116px;top:630px;width:198px;height:54px;background:#f9f9f9;"></div>
<div style="left:1316px;top:630px;width:158px;height:54px;background:#f9f9f9;"></div>
<div style="left:1476px;top:630px;width:218px;height:54px;background:#f9f9f9;"></div>
<div style="left:1696px;top:630px;width:238px;height:54px;background:#f9f9f9;"></div>
<div style="left:1936px;top:630px;width:318px;height:54px;background:#f9f9f9;"></div>
<div style="left:2256px;top:630px;width:298px;height:54px;background:#f9f9f9;"></div>
<div style="left:2556px;top:630px;width:298px;height:54px;background:#f9f9f9;"></div>
<svg style="left:747.95px;top:633.8px;" width="40" height="46" viewBox="0 0 40 46"><g fill="none" stroke="#bfe3f1" stroke-width="3.1"><path d="M2.5 1 V44.3"/><path d="M2.5 2.5 L31.3 15.8 L2.5 29.1 Z" stroke-linejoin="miter"/><path d="M17 36 H34 M25.5 27.6 V44.3"/></g></svg>
<span class="t " style="left:802.61px;top:645px;font-size:29px;line-height:29px;color:#000;letter-spacing:-0.752px;-webkit-text-stroke:0.3px #f9f9f9;">Arch: Project Manager</span>
<span class="t " style="left:1392.55px;top:645px;font-size:29px;line-height:29px;color:#000;letter-spacing:-1.599px;-webkit-text-stroke:0.3px #f9f9f9;">0.00%</span>
<span class="t " style="left:1636.05px;top:645px;font-size:29px;line-height:29px;color:#000;letter-spacing:-1.271px;-webkit-text-stroke:0.3px #f9f9f9;">0.00</span>
<span class="t " style="left:1875.45px;top:645px;font-size:29px;line-height:29px;color:#000;letter-spacing:-1.271px;-webkit-text-stroke:0.3px #f9f9f9;">0.00</span>
<span class="t " style="left:2262.41px;top:645px;font-size:29px;line-height:29px;color:#000;letter-spacing:-0.742px;-webkit-text-stroke:0.3px #f9f9f9;">Arch: Project Manager</span>
<span class="t " style="left:2562.41px;top:645px;font-size:29px;line-height:29px;color:#000;letter-spacing:-0.428px;-webkit-text-stroke:0.3px #f9f9f9;">Architecture</span>
<div style="left:2854px;top:630px;width:660px;height:54.2px;background:#f9f9f9;"></div>
<div style="left:2854px;top:684.2px;width:700px;height:2px;background:#808080;"></div>
<div style="left:3072.3px;top:630px;width:2px;height:56px;background:#777;"></div>
<div style="left:3292.3px;top:630px;width:2px;height:56px;background:#777;"></div>
<span class="t " style="left:2988.60px;top:645px;font-size:29px;line-height:29px;color:#000;letter-spacing:-1.006px;-webkit-text-stroke:0.3px #f9f9f9;">275.00</span>
<span class="t " style="left:3208.30px;top:645px;font-size:29px;line-height:29px;color:#000;letter-spacing:-1.006px;-webkit-text-stroke:0.3px #f9f9f9;">284.00</span>
<span class="t " style="left:3428.30px;top:645px;font-size:29px;line-height:29px;color:#000;letter-spacing:-1.006px;-webkit-text-stroke:0.3px #f9f9f9;">250.00</span>
<svg style="left:3098px;top:634px;" width="44" height="44" viewBox="0 0 44 44"><circle cx="22" cy="22" r="18" fill="none" stroke="#adadad" stroke-width="3.4"/><circle cx="22" cy="13.2" r="2.1" fill="#adadad"/><rect x="20.3" y="19.8" width="3.4" height="12.6" rx="1.6" fill="#adadad"/></svg>
<div style="left:686px;top:690px;width:46.4px;height:54.3px;background:#fff;"></div>
<div style="left:732.4px;top:690px;width:1.9px;height:56.3px;background:#6a6a6a;"></div>
<div style="left:686px;top:744.3px;width:48.3px;height:2px;background:#6a6a6a;"></div>
<div style="left:700.2px;top:716.7px;width:17.7px;height:2px;background:#333;"></div>
<div style="left:708.1px;top:708.9px;width:2px;height:17.7px;background:#333;"></div>
<div style="left:736px;top:690px;width:58px;height:54px;background:#fff;"></div>
<div style="left:796px;top:690px;width:318px;height:54px;background:#fff;"></div>
<div style="left:1116px;top:690px;width:198px;height:54px;background:#fff;"></div>
<div style="left:1316px;top:690px;width:158px;height:54px;background:#fff;"></div>
<div style="left:1476px;top:690px;width:218px;height:54px;background:#fff;"></div>
<div style="left:1696px;top:690px;width:238px;height:54px;background:#fff;"></div>
<div style="left:1936px;top:690px;width:318px;height:54px;background:#fff;"></div>
<div style="left:2256px;top:690px;width:298px;height:54px;background:#fff;"></div>
<div style="left:2556px;top:690px;width:298px;height:54px;background:#fff;"></div>
<svg style="left:747.95px;top:693.8px;" width="40" height="46" viewBox="0 0 40 46"><g fill="none" stroke="#bfe3f1" stroke-width="3.1"><path d="M2.5 1 V44.3"/><path d="M2.5 2.5 L31.3 15.8 L2.5 29.1 Z" stroke-linejoin="miter"/><path d="M17 36 H34 M25.5 27.6 V44.3"/></g></svg>
<span class="t " style="left:802.61px;top:705px;font-size:29px;line-height:29px;color:#000;letter-spacing:-0.667px;-webkit-text-stroke:0.3px #fff;">Arch: Senior Architect</span>
<span class="t " style="left:1392.55px;top:705px;font-size:29px;line-height:29px;color:#000;letter-spacing:-1.599px;-webkit-text-stroke:0.3px #fff;">0.00%</span>
<span class="t " style="left:1636.05px;top:705px;font-size:29px;line-height:29px;color:#000;letter-spacing:-1.271px;-webkit-text-stroke:0.3px #fff;">0.00</span>
<span class="t " style="left:1875.45px;top:705px;font-size:29px;line-height:29px;color:#000;letter-spacing:-1.271px;-webkit-text-stroke:0.3px #fff;">0.00</span>
<span class="t " style="left:2262.41px;top:705px;font-size:29px;line-height:29px;color:#000;letter-spacing:-0.648px;-webkit-text-stroke:0.3px #fff;">Arch: Senior Architect</span>
<span class="t " style="left:2562.41px;top:705px;font-size:29px;line-height:29px;color:#000;letter-spacing:-0.428px;-webkit-text-stroke:0.3px #fff;">Architecture</span>
<div style="left:2854px;top:690px;width:660px;height:54.2px;background:#fff;"></div>
<div style="left:2854px;top:744.2px;width:700px;height:2px;background:#808080;"></div>
<div style="left:3072.3px;top:690px;width:2px;height:56px;background:#777;"></div>
<div style="left:3292.3px;top:690px;width:2px;height:56px;background:#777;"></div>
<span class="t " style="left:2989.40px;top:705px;font-size:29px;line-height:29px;color:#000;letter-spacing:-1.165px;-webkit-text-stroke:0.3px #fff;">425.00</span>
<span class="t " style="left:3209.10px;top:705px;font-size:29px;line-height:29px;color:#000;letter-spacing:-1.165px;-webkit-text-stroke:0.3px #fff;">425.00</span>
<span class="t " style="left:3429.10px;top:705px;font-size:29px;line-height:29px;color:#000;letter-spacing:-1.165px;-webkit-text-stroke:0.3px #fff;">425.00</span>
<svg style="left:3098px;top:694px;" width="44" height="44" viewBox="0 0 44 44"><circle cx="22" cy="22" r="18" fill="none" stroke="#adadad" stroke-width="3.4"/><circle cx="22" cy="13.2" r="2.1" fill="#adadad"/><rect x="20.3" y="19.8" width="3.4" height="12.6" rx="1.6" fill="#adadad"/></svg>
<div style="left:686px;top:750px;width:46.4px;height:54.3px;background:#fff;"></div>
<div style="left:732.4px;top:750px;width:1.9px;height:56.3px;background:#6a6a6a;"></div>
<div style="left:686px;top:804.3px;width:48.3px;height:2px;background:#6a6a6a;"></div>
<div style="left:700.2px;top:776.7px;width:17.7px;height:2px;background:#333;"></div>
<div style="left:708.1px;top:768.9px;width:2px;height:17.7px;background:#333;"></div>
<div style="left:736px;top:750px;width:58px;height:54px;background:#f9f9f9;"></div>
<div style="left:796px;top:750px;width:318px;height:54px;background:#f9f9f9;"></div>
<div style="left:1116px;top:750px;width:198px;height:54px;background:#f9f9f9;"></div>
<div style="left:1316px;top:750px;width:158px;height:54px;background:#f9f9f9;"></div>
<div style="left:1476px;top:750px;width:218px;height:54px;background:#f9f9f9;"></div>
<div style="left:1696px;top:750px;width:238px;height:54px;background:#f9f9f9;"></div>
<div style="left:1936px;top:750px;width:318px;height:54px;background:#f9f9f9;"></div>
<div style="left:2256px;top:750px;width:298px;height:54px;background:#f9f9f9;"></div>
<div style="left:2556px;top:750px;width:298px;height:54px;background:#f9f9f9;"></div>
<svg style="left:747.95px;top:753.8px;" width="40" height="46" viewBox="0 0 40 46"><g fill="none" stroke="#bfe3f1" stroke-width="3.1"><path d="M2.5 1 V44.3"/><path d="M2.5 2.5 L31.3 15.8 L2.5 29.1 Z" stroke-linejoin="miter"/><path d="M17 36 H34 M25.5 27.6 V44.3"/></g></svg>
<span class="t " style="left:802.61px;top:765px;font-size:29px;line-height:29px;color:#000;letter-spacing:-0.724px;-webkit-text-stroke:0.3px #f9f9f9;">Architect: Senior</span>
<span class="t " style="left:1392.55px;top:765px;font-size:29px;line-height:29px;color:#000;letter-spacing:-1.599px;-webkit-text-stroke:0.3px #f9f9f9;">0.00%</span>
<span class="t " style="left:1636.05px;top:765px;font-size:29px;line-height:29px;color:#000;letter-spacing:-1.271px;-webkit-text-stroke:0.3px #f9f9f9;">0.00</span>
<span class="t " style="left:1875.45px;top:765px;font-size:29px;line-height:29px;color:#000;letter-spacing:-1.271px;-webkit-text-stroke:0.3px #f9f9f9;">0.00</span>
<span class="t " style="left:2262.41px;top:765px;font-size:29px;line-height:29px;color:#000;letter-spacing:-0.724px;-webkit-text-stroke:0.3px #f9f9f9;">Architect: Senior</span>
<span class="t " style="left:2562.41px;top:765px;font-size:29px;line-height:29px;color:#000;letter-spacing:-0.428px;-webkit-text-stroke:0.3px #f9f9f9;">Architecture</span>
<div style="left:2854px;top:750px;width:660px;height:54.2px;background:#f9f9f9;"></div>
<div style="left:2854px;top:804.2px;width:700px;height:2px;background:#808080;"></div>
<div style="left:3072.3px;top:750px;width:2px;height:56px;background:#777;"></div>
<div style="left:3292.3px;top:750px;width:2px;height:56px;background:#777;"></div>
<span class="t " style="left:2988.60px;top:765px;font-size:29px;line-height:29px;color:#000;letter-spacing:-1.006px;-webkit-text-stroke:0.3px #f9f9f9;">260.00</span>
<span class="t " style="left:3208.30px;top:765px;font-size:29px;line-height:29px;color:#000;letter-spacing:-1.006px;-webkit-text-stroke:0.3px #f9f9f9;">280.00</span>
<span class="t " style="left:3428.66px;top:765px;font-size:29px;line-height:29px;color:#000;letter-spacing:-1.078px;-webkit-text-stroke:0.3px #f9f9f9;">320.00</span>
<svg style="left:3098px;top:754px;" width="44" height="44" viewBox="0 0 44 44"><circle cx="22" cy="22" r="18" fill="none" stroke="#adadad" stroke-width="3.4"/><circle cx="22" cy="13.2" r="2.1" fill="#adadad"/><rect x="20.3" y="19.8" width="3.4" height="12.6" rx="1.6" fill="#adadad"/></svg>
<div style="left:686px;top:810px;width:46.4px;height:54.3px;background:#fff;"></div>
<div style="left:732.4px;top:810px;width:1.9px;height:56.3px;background:#6a6a6a;"></div>
<div style="left:686px;top:864.3px;width:48.3px;height:2px;background:#6a6a6a;"></div>
<div style="left:700.2px;top:836.7px;width:17.7px;height:2px;background:#333;"></div>
<div style="left:708.1px;top:828.9px;width:2px;height:17.7px;background:#333;"></div>
<div style="left:736px;top:810px;width:58px;height:54px;background:#fff;"></div>
<div style="left:796px;top:810px;width:318px;height:54px;background:#fff;"></div>
<div style="left:1116px;top:810px;width:198px;height:54px;background:#fff;"></div>
<div style="left:1316px;top:810px;width:158px;height:54px;background:#fff;"></div>
<div style="left:1476px;top:810px;width:218px;height:54px;background:#fff;"></div>
<div style="left:1696px;top:810px;width:238px;height:54px;background:#fff;"></div>
<div style="left:1936px;top:810px;width:318px;height:54px;background:#fff;"></div>
<div style="left:2256px;top:810px;width:298px;height:54px;background:#fff;"></div>
<div style="left:2556px;top:810px;width:298px;height:54px;background:#fff;"></div>
<svg style="left:747.95px;top:813.8px;" width="40" height="46" viewBox="0 0 40 46"><g fill="none" stroke="#bfe3f1" stroke-width="3.1"><path d="M2.5 1 V44.3"/><path d="M2.5 2.5 L31.3 15.8 L2.5 29.1 Z" stroke-linejoin="miter"/><path d="M17 36 H34 M25.5 27.6 V44.3"/></g></svg>
<span class="t " style="left:1392.55px;top:825px;font-size:29px;line-height:29px;color:#000;letter-spacing:-1.599px;-webkit-text-stroke:0.3px #fff;">0.00%</span>
<span class="t " style="left:1636.05px;top:825px;font-size:29px;line-height:29px;color:#000;letter-spacing:-1.271px;-webkit-text-stroke:0.3px #fff;">0.00</span>
<span class="t " style="left:1875.45px;top:825px;font-size:29px;line-height:29px;color:#000;letter-spacing:-1.271px;-webkit-text-stroke:0.3px #fff;">0.00</span>
<div style="left:2854px;top:810px;width:660px;height:54.2px;background:#fff;"></div>
<div style="left:2854px;top:864.2px;width:700px;height:2px;background:#808080;"></div>
<div style="left:3072.3px;top:810px;width:2px;height:56px;background:#777;"></div>
<div style="left:3292.3px;top:810px;width:2px;height:56px;background:#777;"></div>
<span class="t " style="left:3019.65px;top:825px;font-size:29px;line-height:29px;color:#000;letter-spacing:-1.271px;-webkit-text-stroke:0.3px #fff;">0.00</span>
<span class="t " style="left:3239.35px;top:825px;font-size:29px;line-height:29px;color:#000;letter-spacing:-1.271px;-webkit-text-stroke:0.3px #fff;">0.00</span>
<span class="t " style="left:3459.35px;top:825px;font-size:29px;line-height:29px;color:#000;letter-spacing:-1.271px;-webkit-text-stroke:0.3px #fff;">0.00</span>
<div style="left:686px;top:870px;width:46.4px;height:54.3px;background:#fff;"></div>
<div style="left:732.4px;top:870px;width:1.9px;height:56.3px;background:#6a6a6a;"></div>
<div style="left:686px;top:924.3px;width:48.3px;height:2px;background:#6a6a6a;"></div>
<div style="left:700.2px;top:896.7px;width:17.7px;height:2px;background:#333;"></div>
<div style="left:708.1px;top:888.9px;width:2px;height:17.7px;background:#333;"></div>
<div style="left:736px;top:870px;width:58px;height:54px;background:#f9f9f9;"></div>
<div style="left:796px;top:870px;width:318px;height:54px;background:#f9f9f9;"></div>
<div style="left:1116px;top:870px;width:198px;height:54px;background:#f9f9f9;"></div>
<div style="left:1316px;top:870px;width:158px;height:54px;background:#f9f9f9;"></div>
<div style="left:1476px;top:870px;width:218px;height:54px;background:#f9f9f9;"></div>
<div style="left:1696px;top:870px;width:238px;height:54px;background:#f9f9f9;"></div>
<div style="left:1936px;top:870px;width:318px;height:54px;background:#f9f9f9;"></div>
<div style="left:2256px;top:870px;width:298px;height:54px;background:#f9f9f9;"></div>
<div style="left:2556px;top:870px;width:298px;height:54px;background:#f9f9f9;"></div>
<svg style="left:747.95px;top:873.8px;" width="40" height="46" viewBox="0 0 40 46"><g fill="none" stroke="#4ea5d5" stroke-width="3.1"><path d="M2.5 1 V44.3"/><path d="M2.5 2.5 L31.3 15.8 L2.5 29.1 Z" stroke-linejoin="miter"/><path d="M17 36 H34 M25.5 27.6 V44.3"/></g></svg>
<span class="t " style="left:800.50px;top:885px;font-size:29px;line-height:29px;color:#000;transform:scaleX(0.9121);transform-origin:0 0;-webkit-text-stroke:0.3px #f9f9f9;">Bob Rayes</span>
<span class="t " style="left:1121.22px;top:885px;font-size:29px;line-height:29px;color:#000;transform:scaleX(0.9175);transform-origin:0 0;-webkit-text-stroke:0.3px #f9f9f9;">001:01:013:00</span>
<span class="t " style="left:1376.86px;top:885px;font-size:29px;line-height:29px;color:#000;letter-spacing:-1.368px;-webkit-text-stroke:0.3px #f9f9f9;">65.00%</span>
<span class="t " style="left:1621.16px;top:885px;font-size:29px;line-height:29px;color:#000;letter-spacing:-1.264px;-webkit-text-stroke:0.3px #f9f9f9;">40.00</span>
<span class="t " style="left:1859.76px;top:885px;font-size:29px;line-height:29px;color:#000;letter-spacing:-1.065px;-webkit-text-stroke:0.3px #f9f9f9;">26.00</span>
<span class="t " style="left:1940.49px;top:885px;font-size:29px;line-height:29px;color:#000;letter-spacing:0.075px;-webkit-text-stroke:0.3px #f9f9f9;">Matt Watts</span>
<span class="t " style="left:2262.41px;top:885px;font-size:29px;line-height:29px;color:#000;letter-spacing:-0.742px;-webkit-text-stroke:0.3px #f9f9f9;">Arch: Project Manager</span>
<div style="left:2854px;top:870px;width:660px;height:54.2px;background:#c0d4ec;"></div>
<div style="left:2854px;top:924.2px;width:700px;height:2px;background:#808080;"></div>
<div style="left:3072.3px;top:870px;width:2px;height:56px;background:#777;"></div>
<div style="left:3292.3px;top:870px;width:2px;height:56px;background:#777;"></div>
<span class="t " style="left:3019.32px;top:885px;font-size:29px;line-height:29px;color:#000;letter-spacing:-1.138px;-webkit-text-stroke:0.3px #c0d4ec;">6.25</span>
<span class="t " style="left:3239.02px;top:885px;font-size:29px;line-height:29px;color:#000;letter-spacing:-1.138px;-webkit-text-stroke:0.3px #c0d4ec;">6.25</span>
<span class="t " style="left:3459.02px;top:885px;font-size:29px;line-height:29px;color:#000;letter-spacing:-1.138px;-webkit-text-stroke:0.3px #c0d4ec;">6.25</span>
<div style="left:686px;top:930px;width:46.4px;height:54.3px;background:#fff;"></div>
<div style="left:732.4px;top:930px;width:1.9px;height:56.3px;background:#6a6a6a;"></div>
<div style="left:686px;top:984.3px;width:48.3px;height:2px;background:#6a6a6a;"></div>
<div style="left:700.2px;top:956.7px;width:17.7px;height:2px;background:#333;"></div>
<div style="left:708.1px;top:948.9px;width:2px;height:17.7px;background:#333;"></div>
<div style="left:736px;top:930px;width:58px;height:54px;background:#fff;"></div>
<div style="left:796px;top:930px;width:318px;height:54px;background:#fff;"></div>
<div style="left:1116px;top:930px;width:198px;height:54px;background:#fff;"></div>
<div style="left:1316px;top:930px;width:158px;height:54px;background:#fff;"></div>
<div style="left:1476px;top:930px;width:218px;height:54px;background:#fff;"></div>
<div style="left:1696px;top:930px;width:238px;height:54px;background:#fff;"></div>
<div style="left:1936px;top:930px;width:318px;height:54px;background:#fff;"></div>
<div style="left:2256px;top:930px;width:298px;height:54px;background:#fff;"></div>
<div style="left:2556px;top:930px;width:298px;height:54px;background:#fff;"></div>
<svg style="left:747.95px;top:933.8px;" width="40" height="46" viewBox="0 0 40 46"><g fill="none" stroke="#bfe3f1" stroke-width="3.1"><path d="M2.5 1 V44.3"/><path d="M2.5 2.5 L31.3 15.8 L2.5 29.1 Z" stroke-linejoin="miter"/><path d="M17 36 H34 M25.5 27.6 V44.3"/></g></svg>
<span class="t " style="left:800.29px;top:945px;font-size:29px;line-height:29px;color:#000;letter-spacing:-0.484px;-webkit-text-stroke:0.3px #fff;">Design</span>
<span class="t " style="left:1392.55px;top:945px;font-size:29px;line-height:29px;color:#000;letter-spacing:-1.599px;-webkit-text-stroke:0.3px #fff;">0.00%</span>
<span class="t " style="left:1636.05px;top:945px;font-size:29px;line-height:29px;color:#000;letter-spacing:-1.271px;-webkit-text-stroke:0.3px #fff;">0.00</span>
<span class="t " style="left:1875.45px;top:945px;font-size:29px;line-height:29px;color:#000;letter-spacing:-1.271px;-webkit-text-stroke:0.3px #fff;">0.00</span>
<span class="t " style="left:2260.09px;top:945px;font-size:29px;line-height:29px;color:#000;letter-spacing:-0.444px;-webkit-text-stroke:0.3px #fff;">Design</span>
<span class="t " style="left:2560.27px;top:945px;font-size:29px;line-height:29px;color:#000;transform:scaleX(0.9250);transform-origin:0 0;-webkit-text-stroke:0.3px #fff;">Design Services</span>
<div style="left:2854px;top:930px;width:660px;height:54.2px;background:#fff;"></div>
<div style="left:2854px;top:984.2px;width:700px;height:2px;background:#808080;"></div>
<div style="left:3072.3px;top:930px;width:2px;height:56px;background:#777;"></div>
<div style="left:3292.3px;top:930px;width:2px;height:56px;background:#777;"></div>
<span class="t " style="left:3019.65px;top:945px;font-size:29px;line-height:29px;color:#000;letter-spacing:-1.271px;-webkit-text-stroke:0.3px #fff;">0.00</span>
<span class="t " style="left:3239.35px;top:945px;font-size:29px;line-height:29px;color:#000;letter-spacing:-1.271px;-webkit-text-stroke:0.3px #fff;">0.00</span>
<span class="t " style="left:3459.35px;top:945px;font-size:29px;line-height:29px;color:#000;letter-spacing:-1.271px;-webkit-text-stroke:0.3px #fff;">0.00</span>
<div style="left:686px;top:990px;width:46.4px;height:54.3px;background:#fff;"></div>
<div style="left:732.4px;top:990px;width:1.9px;height:56.3px;background:#6a6a6a;"></div>
<div style="left:686px;top:1044.3px;width:48.3px;height:2px;background:#6a6a6a;"></div>
<div style="left:700.2px;top:1016.7px;width:17.7px;height:2px;background:#333;"></div>
<div style="left:708.1px;top:1008.9px;width:2px;height:17.7px;background:#333;"></div>
<div style="left:736px;top:990px;width:58px;height:54px;background:#f9f9f9;"></div>
<div style="left:796px;top:990px;width:318px;height:54px;background:#f9f9f9;"></div>
<div style="left:1116px;top:990px;width:198px;height:54px;background:#f9f9f9;"></div>
<div style="left:1316px;top:990px;width:158px;height:54px;background:#f9f9f9;"></div>
<div style="left:1476px;top:990px;width:218px;height:54px;background:#f9f9f9;"></div>
<div style="left:1696px;top:990px;width:238px;height:54px;background:#f9f9f9;"></div>
<div style="left:1936px;top:990px;width:318px;height:54px;background:#f9f9f9;"></div>
<div style="left:2256px;top:990px;width:298px;height:54px;background:#f9f9f9;"></div>
<div style="left:2556px;top:990px;width:298px;height:54px;background:#f9f9f9;"></div>
<svg style="left:747.95px;top:993.8px;" width="40" height="46" viewBox="0 0 40 46"><g fill="none" stroke="#bfe3f1" stroke-width="3.1"><path d="M2.5 1 V44.3"/><path d="M2.5 2.5 L31.3 15.8 L2.5 29.1 Z" stroke-linejoin="miter"/><path d="M17 36 H34 M25.5 27.6 V44.3"/></g></svg>
<span class="t " style="left:800.57px;top:1005px;font-size:29px;line-height:29px;color:#000;transform:scaleX(0.8838);transform-origin:0 0;-webkit-text-stroke:0.3px #f9f9f9;">EE: Sr. Engineer</span>
<span class="t " style="left:1392.55px;top:1005px;font-size:29px;line-height:29px;color:#000;letter-spacing:-1.599px;-webkit-text-stroke:0.3px #f9f9f9;">0.00%</span>
<span class="t " style="left:1636.05px;top:1005px;font-size:29px;line-height:29px;color:#000;letter-spacing:-1.271px;-webkit-text-stroke:0.3px #f9f9f9;">0.00</span>
<span class="t " style="left:1875.45px;top:1005px;font-size:29px;line-height:29px;color:#000;letter-spacing:-1.271px;-webkit-text-stroke:0.3px #f9f9f9;">0.00</span>
<span class="t " style="left:2260.37px;top:1005px;font-size:29px;line-height:29px;color:#000;transform:scaleX(0.8847);transform-origin:0 0;-webkit-text-stroke:0.3px #f9f9f9;">EE: Sr. Engineer</span>
<span class="t " style="left:2560.09px;top:1005px;font-size:29px;line-height:29px;color:#000;letter-spacing:-0.677px;-webkit-text-stroke:0.3px #f9f9f9;">Electrical</span>
<div style="left:2854px;top:990px;width:660px;height:54.2px;background:#f9f9f9;"></div>
<div style="left:2854px;top:1044.2px;width:700px;height:2px;background:#808080;"></div>
<div style="left:3072.3px;top:990px;width:2px;height:56px;background:#777;"></div>
<div style="left:3292.3px;top:990px;width:2px;height:56px;background:#777;"></div>
<span class="t " style="left:3004.18px;top:1005px;font-size:29px;line-height:29px;color:#000;letter-spacing:-1.119px;-webkit-text-stroke:0.3px #f9f9f9;">80.00</span>
<span class="t " style="left:3223.62px;top:1005px;font-size:29px;line-height:29px;color:#000;letter-spacing:-1.056px;-webkit-text-stroke:0.3px #f9f9f9;">72.00</span>
<span class="t " style="left:3444.46px;top:1005px;font-size:29px;line-height:29px;color:#000;letter-spacing:-1.264px;-webkit-text-stroke:0.3px #f9f9f9;">40.00</span>
<div style="left:686px;top:1050px;width:46.4px;height:54.3px;background:#fff;"></div>
<div style="left:732.4px;top:1050px;width:1.9px;height:56.3px;background:#6a6a6a;"></div>
<div style="left:686px;top:1104.3px;width:48.3px;height:2px;background:#6a6a6a;"></div>
<div style="left:700.2px;top:1076.7px;width:17.7px;height:2px;background:#333;"></div>
<div style="left:708.1px;top:1068.9px;width:2px;height:17.7px;background:#333;"></div>
<div style="left:736px;top:1050px;width:58px;height:54px;background:#fff;"></div>
<div style="left:796px;top:1050px;width:318px;height:54px;background:#fff;"></div>
<div style="left:1116px;top:1050px;width:198px;height:54px;background:#fff;"></div>
<div style="left:1316px;top:1050px;width:158px;height:54px;background:#fff;"></div>
<div style="left:1476px;top:1050px;width:218px;height:54px;background:#fff;"></div>
<div style="left:1696px;top:1050px;width:238px;height:54px;background:#fff;"></div>
<div style="left:1936px;top:1050px;width:318px;height:54px;background:#fff;"></div>
<div style="left:2256px;top:1050px;width:298px;height:54px;background:#fff;"></div>
<div style="left:2556px;top:1050px;width:298px;height:54px;background:#fff;"></div>
<svg style="left:747.95px;top:1053.8px;" width="40" height="46" viewBox="0 0 40 46"><g fill="none" stroke="#bfe3f1" stroke-width="3.1"><path d="M2.5 1 V44.3"/><path d="M2.5 2.5 L31.3 15.8 L2.5 29.1 Z" stroke-linejoin="miter"/><path d="M17 36 H34 M25.5 27.6 V44.3"/></g></svg>
<span class="t " style="left:800.00px;top:1065px;font-size:29px;line-height:29px;color:#000;letter-spacing:-0.174px;-webkit-text-stroke:0.3px #fff;">Interior Design</span>
<span class="t " style="left:1392.55px;top:1065px;font-size:29px;line-height:29px;color:#000;letter-spacing:-1.599px;-webkit-text-stroke:0.3px #fff;">0.00%</span>
<span class="t " style="left:1636.05px;top:1065px;font-size:29px;line-height:29px;color:#000;letter-spacing:-1.271px;-webkit-text-stroke:0.3px #fff;">0.00</span>
<span class="t " style="left:1875.45px;top:1065px;font-size:29px;line-height:29px;color:#000;letter-spacing:-1.271px;-webkit-text-stroke:0.3px #fff;">0.00</span>
<span class="t " style="left:2259.80px;top:1065px;font-size:29px;line-height:29px;color:#000;letter-spacing:-0.160px;-webkit-text-stroke:0.3px #fff;">Interior Design</span>
<span class="t " style="left:2559.80px;top:1065px;font-size:29px;line-height:29px;color:#000;letter-spacing:-0.063px;-webkit-text-stroke:0.3px #fff;">Interiors</span>
<div style="left:2854px;top:1050px;width:660px;height:54.2px;background:#fff;"></div>
<div style="left:2854px;top:1104.2px;width:700px;height:2px;background:#808080;"></div>
<div style="left:3072.3px;top:1050px;width:2px;height:56px;background:#777;"></div>
<div style="left:3292.3px;top:1050px;width:2px;height:56px;background:#777;"></div>
<span class="t " style="left:2987.87px;top:1065px;font-size:29px;line-height:29px;color:#000;letter-spacing:-0.861px;-webkit-text-stroke:0.3px #fff;">176.00</span>
<span class="t " style="left:3207.57px;top:1065px;font-size:29px;line-height:29px;color:#000;letter-spacing:-0.861px;-webkit-text-stroke:0.3px #fff;">192.00</span>
<span class="t " style="left:3427.57px;top:1065px;font-size:29px;line-height:29px;color:#000;letter-spacing:-0.861px;-webkit-text-stroke:0.3px #fff;">160.00</span>
<svg style="left:3098px;top:1054px;" width="44" height="44" viewBox="0 0 44 44"><circle cx="22" cy="22" r="18" fill="none" stroke="#adadad" stroke-width="3.4"/><circle cx="22" cy="13.2" r="2.1" fill="#adadad"/><rect x="20.3" y="19.8" width="3.4" height="12.6" rx="1.6" fill="#adadad"/></svg>
<div style="left:686px;top:1110px;width:46.4px;height:54.3px;background:#fff;"></div>
<div style="left:732.4px;top:1110px;width:1.9px;height:56.3px;background:#6a6a6a;"></div>
<div style="left:686px;top:1164.3px;width:48.3px;height:2px;background:#6a6a6a;"></div>
<div style="left:736px;top:1110px;width:58px;height:54px;background:#f9f9f9;"></div>
<div style="left:796px;top:1110px;width:318px;height:54px;background:#f9f9f9;"></div>
<div style="left:1116px;top:1110px;width:198px;height:54px;background:#f9f9f9;"></div>
<div style="left:1316px;top:1110px;width:158px;height:54px;background:#f9f9f9;"></div>
<div style="left:1476px;top:1110px;width:218px;height:54px;background:#f9f9f9;"></div>
<div style="left:1696px;top:1110px;width:238px;height:54px;background:#f9f9f9;"></div>
<div style="left:1936px;top:1110px;width:318px;height:54px;background:#f9f9f9;"></div>
<div style="left:2256px;top:1110px;width:298px;height:54px;background:#f9f9f9;"></div>
<div style="left:2556px;top:1110px;width:298px;height:54px;background:#f9f9f9;"></div>
<svg style="left:747.95px;top:1113.8px;" width="40" height="46" viewBox="0 0 40 46"><g fill="none" stroke="#bfe3f1" stroke-width="3.1"><path d="M2.5 1 V44.3"/><path d="M2.5 2.5 L31.3 15.8 L2.5 29.1 Z" stroke-linejoin="miter"/><path d="M17 36 H34 M25.5 27.6 V44.3"/></g></svg>
<span class="t " style="left:800.00px;top:1125px;font-size:29px;line-height:29px;color:#000;letter-spacing:-0.080px;-webkit-text-stroke:0.3px #f9f9f9;">Intern Architect</span>
<span class="t " style="left:1392.55px;top:1125px;font-size:29px;line-height:29px;color:#000;letter-spacing:-1.599px;-webkit-text-stroke:0.3px #f9f9f9;">0.00%</span>
<span class="t " style="left:1636.05px;top:1125px;font-size:29px;line-height:29px;color:#000;letter-spacing:-1.271px;-webkit-text-stroke:0.3px #f9f9f9;">0.00</span>
<span class="t " style="left:1875.45px;top:1125px;font-size:29px;line-height:29px;color:#000;letter-spacing:-1.271px;-webkit-text-stroke:0.3px #f9f9f9;">0.00</span>
<span class="t " style="left:2259.80px;top:1125px;font-size:29px;line-height:29px;color:#000;letter-spacing:-0.067px;-webkit-text-stroke:0.3px #f9f9f9;">Intern Architect</span>
<span class="t " style="left:2560.27px;top:1125px;font-size:29px;line-height:29px;color:#000;transform:scaleX(0.9250);transform-origin:0 0;-webkit-text-stroke:0.3px #f9f9f9;">Design Services</span>
<div style="left:2854px;top:1110px;width:660px;height:54.2px;background:#f9f9f9;"></div>
<div style="left:2854px;top:1164.2px;width:700px;height:2px;background:#808080;"></div>
<div style="left:3072.3px;top:1110px;width:2px;height:56px;background:#777;"></div>
<div style="left:3292.3px;top:1110px;width:2px;height:56px;background:#777;"></div>
<span class="t " style="left:3019.65px;top:1125px;font-size:29px;line-height:29px;color:#000;letter-spacing:-1.271px;-webkit-text-stroke:0.3px #f9f9f9;">0.00</span>
<span class="t " style="left:3239.35px;top:1125px;font-size:29px;line-height:29px;color:#000;letter-spacing:-1.271px;-webkit-text-stroke:0.3px #f9f9f9;">0.00</span>
<span class="t " style="left:3459.35px;top:1125px;font-size:29px;line-height:29px;color:#000;letter-spacing:-1.271px;-webkit-text-stroke:0.3px #f9f9f9;">0.00</span>
<div style="left:686px;top:1170px;width:46.4px;height:54.3px;background:#fff;"></div>
<div style="left:732.4px;top:1170px;width:1.9px;height:56.3px;background:#6a6a6a;"></div>
<div style="left:686px;top:1224.3px;width:48.3px;height:2px;background:#6a6a6a;"></div>
<div style="left:736px;top:1170px;width:58px;height:54px;background:#fff;"></div>
<div style="left:796px;top:1170px;width:318px;height:54px;background:#fff;"></div>
<div style="left:1116px;top:1170px;width:198px;height:54px;background:#fff;"></div>
<div style="left:1316px;top:1170px;width:158px;height:54px;background:#fff;"></div>
<div style="left:1476px;top:1170px;width:218px;height:54px;background:#fff;"></div>
<div style="left:1696px;top:1170px;width:238px;height:54px;background:#fff;"></div>
<div style="left:1936px;top:1170px;width:318px;height:54px;background:#fff;"></div>
<div style="left:2256px;top:1170px;width:298px;height:54px;background:#fff;"></div>
<div style="left:2556px;top:1170px;width:298px;height:54px;background:#fff;"></div>
<svg style="left:747.95px;top:1173.8px;" width="40" height="46" viewBox="0 0 40 46"><g fill="none" stroke="#bfe3f1" stroke-width="3.1"><path d="M2.5 1 V44.3"/><path d="M2.5 2.5 L31.3 15.8 L2.5 29.1 Z" stroke-linejoin="miter"/><path d="M17 36 H34 M25.5 27.6 V44.3"/></g></svg>
<span class="t " style="left:800.00px;top:1185px;font-size:29px;line-height:29px;color:#000;letter-spacing:-0.412px;-webkit-text-stroke:0.3px #fff;">Intern Designer</span>
<span class="t " style="left:1392.55px;top:1185px;font-size:29px;line-height:29px;color:#000;letter-spacing:-1.599px;-webkit-text-stroke:0.3px #fff;">0.00%</span>
<span class="t " style="left:1636.05px;top:1185px;font-size:29px;line-height:29px;color:#000;letter-spacing:-1.271px;-webkit-text-stroke:0.3px #fff;">0.00</span>
<span class="t " style="left:1875.45px;top:1185px;font-size:29px;line-height:29px;color:#000;letter-spacing:-1.271px;-webkit-text-stroke:0.3px #fff;">0.00</span>
<span class="t " style="left:2259.80px;top:1185px;font-size:29px;line-height:29px;color:#000;letter-spacing:-0.398px;-webkit-text-stroke:0.3px #fff;">Intern Designer</span>
<span class="t " style="left:2560.27px;top:1185px;font-size:29px;line-height:29px;color:#000;transform:scaleX(0.9250);transform-origin:0 0;-webkit-text-stroke:0.3px #fff;">Design Services</span>
<div style="left:2854px;top:1170px;width:660px;height:54.2px;background:#fff;"></div>
<div style="left:2854px;top:1224.2px;width:700px;height:2px;background:#808080;"></div>
<div style="left:3072.3px;top:1170px;width:2px;height:56px;background:#777;"></div>
<div style="left:3292.3px;top:1170px;width:2px;height:56px;background:#777;"></div>
<span class="t " style="left:3019.65px;top:1185px;font-size:29px;line-height:29px;color:#000;letter-spacing:-1.271px;-webkit-text-stroke:0.3px #fff;">0.00</span>
<span class="t " style="left:3239.35px;top:1185px;font-size:29px;line-height:29px;color:#000;letter-spacing:-1.271px;-webkit-text-stroke:0.3px #fff;">0.00</span>
<span class="t " style="left:3459.35px;top:1185px;font-size:29px;line-height:29px;color:#000;letter-spacing:-1.271px;-webkit-text-stroke:0.3px #fff;">0.00</span>
<div style="left:686px;top:1230px;width:46.4px;height:54.3px;background:#fff;"></div>
<div style="left:732.4px;top:1230px;width:1.9px;height:56.3px;background:#6a6a6a;"></div>
<div style="left:686px;top:1284.3px;width:48.3px;height:2px;background:#6a6a6a;"></div>
<div style="left:736px;top:1230px;width:58px;height:54px;background:#f9f9f9;"></div>
<div style="left:796px;top:1230px;width:318px;height:54px;background:#f9f9f9;"></div>
<div style="left:1116px;top:1230px;width:198px;height:54px;background:#f9f9f9;"></div>
<div style="left:1316px;top:1230px;width:158px;height:54px;background:#f9f9f9;"></div>
<div style="left:1476px;top:1230px;width:218px;height:54px;background:#f9f9f9;"></div>
<div style="left:1696px;top:1230px;width:238px;height:54px;background:#f9f9f9;"></div>
<div style="left:1936px;top:1230px;width:318px;height:54px;background:#f9f9f9;"></div>
<div style="left:2256px;top:1230px;width:298px;height:54px;background:#f9f9f9;"></div>
<div style="left:2556px;top:1230px;width:298px;height:54px;background:#f9f9f9;"></div>
<svg style="left:747.95px;top:1233.8px;" width="40" height="46" viewBox="0 0 40 46"><g fill="none" stroke="#bfe3f1" stroke-width="3.1"><path d="M2.5 1 V44.3"/><path d="M2.5 2.5 L31.3 15.8 L2.5 29.1 Z" stroke-linejoin="miter"/><path d="M17 36 H34 M25.5 27.6 V44.3"/></g></svg>
<span class="t " style="left:800.00px;top:1245px;font-size:29px;line-height:29px;color:#000;letter-spacing:-0.198px;-webkit-text-stroke:0.3px #f9f9f9;">Intern Interior Design</span>
<span class="t " style="left:1392.55px;top:1245px;font-size:29px;line-height:29px;color:#000;letter-spacing:-1.599px;-webkit-text-stroke:0.3px #f9f9f9;">0.00%</span>
<span class="t " style="left:1636.05px;top:1245px;font-size:29px;line-height:29px;color:#000;letter-spacing:-1.271px;-webkit-text-stroke:0.3px #f9f9f9;">0.00</span>
<span class="t " style="left:1875.45px;top:1245px;font-size:29px;line-height:29px;color:#000;letter-spacing:-1.271px;-webkit-text-stroke:0.3px #f9f9f9;">0.00</span>
<span class="t " style="left:2259.80px;top:1245px;font-size:29px;line-height:29px;color:#000;letter-spacing:-0.188px;-webkit-text-stroke:0.3px #f9f9f9;">Intern Interior Design</span>
<span class="t " style="left:2559.80px;top:1245px;font-size:29px;line-height:29px;color:#000;letter-spacing:-0.063px;-webkit-text-stroke:0.3px #f9f9f9;">Interiors</span>
<div style="left:2854px;top:1230px;width:660px;height:54.2px;background:#f9f9f9;"></div>
<div style="left:2854px;top:1284.2px;width:700px;height:2px;background:#808080;"></div>
<div style="left:3072.3px;top:1230px;width:2px;height:56px;background:#777;"></div>
<div style="left:3292.3px;top:1230px;width:2px;height:56px;background:#777;"></div>
<span class="t " style="left:3019.65px;top:1245px;font-size:29px;line-height:29px;color:#000;letter-spacing:-1.271px;-webkit-text-stroke:0.3px #f9f9f9;">0.00</span>
<span class="t " style="left:3239.35px;top:1245px;font-size:29px;line-height:29px;color:#000;letter-spacing:-1.271px;-webkit-text-stroke:0.3px #f9f9f9;">0.00</span>
<span class="t " style="left:3459.35px;top:1245px;font-size:29px;line-height:29px;color:#000;letter-spacing:-1.271px;-webkit-text-stroke:0.3px #f9f9f9;">0.00</span>
<div style="left:686px;top:1290px;width:46.4px;height:54.3px;background:#fff;"></div>
<div style="left:732.4px;top:1290px;width:1.9px;height:56.3px;background:#6a6a6a;"></div>
<div style="left:686px;top:1344.3px;width:48.3px;height:2px;background:#6a6a6a;"></div>
<div style="left:700.2px;top:1316.7px;width:17.7px;height:2px;background:#333;"></div>
<div style="left:708.1px;top:1308.9px;width:2px;height:17.7px;background:#333;"></div>
<div style="left:736px;top:1290px;width:58px;height:54px;background:#fff;"></div>
<div style="left:796px;top:1290px;width:318px;height:54px;background:#fff;"></div>
<div style="left:1116px;top:1290px;width:198px;height:54px;background:#fff;"></div>
<div style="left:1316px;top:1290px;width:158px;height:54px;background:#fff;"></div>
<div style="left:1476px;top:1290px;width:218px;height:54px;background:#fff;"></div>
<div style="left:1696px;top:1290px;width:238px;height:54px;background:#fff;"></div>
<div style="left:1936px;top:1290px;width:318px;height:54px;background:#fff;"></div>
<div style="left:2256px;top:1290px;width:298px;height:54px;background:#fff;"></div>
<div style="left:2556px;top:1290px;width:298px;height:54px;background:#fff;"></div>
<svg style="left:747.95px;top:1293.8px;" width="40" height="46" viewBox="0 0 40 46"><g fill="none" stroke="#bfe3f1" stroke-width="3.1"><path d="M2.5 1 V44.3"/><path d="M2.5 2.5 L31.3 15.8 L2.5 29.1 Z" stroke-linejoin="miter"/><path d="M17 36 H34 M25.5 27.6 V44.3"/></g></svg>
<span class="t " style="left:802.24px;top:1305px;font-size:29px;line-height:29px;color:#000;transform:scaleX(0.9399);transform-origin:0 0;-webkit-text-stroke:0.3px #fff;">Job Captain</span>
<span class="t " style="left:1392.55px;top:1305px;font-size:29px;line-height:29px;color:#000;letter-spacing:-1.599px;-webkit-text-stroke:0.3px #fff;">0.00%</span>
<span class="t " style="left:1636.05px;top:1305px;font-size:29px;line-height:29px;color:#000;letter-spacing:-1.271px;-webkit-text-stroke:0.3px #fff;">0.00</span>
<span class="t " style="left:1875.45px;top:1305px;font-size:29px;line-height:29px;color:#000;letter-spacing:-1.271px;-webkit-text-stroke:0.3px #fff;">0.00</span>
<span class="t " style="left:2262.04px;top:1305px;font-size:29px;line-height:29px;color:#000;transform:scaleX(0.9412);transform-origin:0 0;-webkit-text-stroke:0.3px #fff;">Job Captain</span>
<span class="t " style="left:2562.41px;top:1305px;font-size:29px;line-height:29px;color:#000;letter-spacing:-0.428px;-webkit-text-stroke:0.3px #fff;">Architecture</span>
<div style="left:2854px;top:1290px;width:660px;height:54.2px;background:#fff;"></div>
<div style="left:2854px;top:1344.2px;width:700px;height:2px;background:#808080;"></div>
<div style="left:3072.3px;top:1290px;width:2px;height:56px;background:#777;"></div>
<div style="left:3292.3px;top:1290px;width:2px;height:56px;background:#777;"></div>
<span class="t " style="left:3004.76px;top:1305px;font-size:29px;line-height:29px;color:#000;letter-spacing:-1.264px;-webkit-text-stroke:0.3px #fff;">40.00</span>
<span class="t " style="left:3224.46px;top:1305px;font-size:29px;line-height:29px;color:#000;letter-spacing:-1.264px;-webkit-text-stroke:0.3px #fff;">48.00</span>
<span class="t " style="left:3443.88px;top:1305px;font-size:29px;line-height:29px;color:#000;letter-spacing:-1.119px;-webkit-text-stroke:0.3px #fff;">80.00</span>
<span class="t " style="left:802.62px;top:805px;font-size:29px;line-height:29px;color:#000;transform:scaleX(0.9195);transform-origin:0 0;-webkit-text-stroke:0.3px #fff;">Associate</span>
<span class="t " style="left:2262.42px;top:805px;font-size:29px;line-height:29px;color:#000;transform:scaleX(0.9236);transform-origin:0 0;-webkit-text-stroke:0.3px #fff;">Associate</span>
</div>
<div style="left:1588px;top:0px;width:380.5px;height:14px;background:#e23421;"></div>
<div style="left:1588px;top:91.5px;width:380.5px;height:14.5px;background:#e23421;"></div>
<div style="left:1588px;top:14px;width:14px;height:77.5px;background:#e23421;"></div>
<div style="left:1954px;top:14px;width:14.5px;height:77.5px;background:#e23421;"></div>
<div style="left:325px;top:69.7px;width:370px;height:14.399999999999991px;background:#e23421;"></div>
<div style="left:325px;top:191.8px;width:370px;height:14.399999999999977px;background:#e23421;"></div>
<div style="left:325px;top:84.1px;width:14.300000000000011px;height:107.70000000000002px;background:#e23421;"></div>
<div style="left:680.6px;top:84.1px;width:14.399999999999977px;height:107.70000000000002px;background:#e23421;"></div>
</div></body></html>
